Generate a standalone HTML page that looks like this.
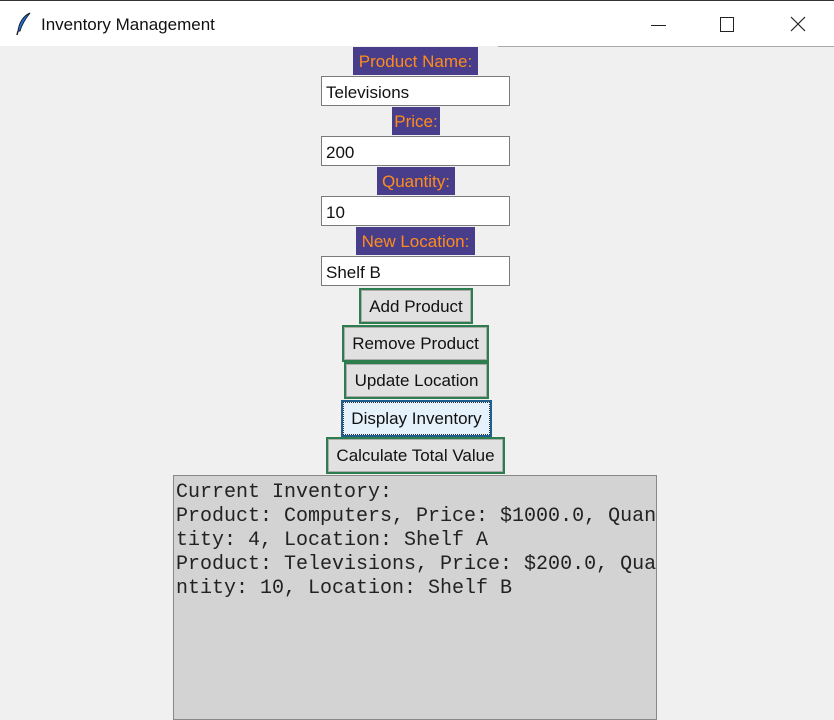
<!DOCTYPE html>
<html><head><meta charset="utf-8"><style>
*{margin:0;padding:0;box-sizing:border-box}
body{width:834px;height:720px;background:#f0f0f0;position:relative;overflow:hidden;font-family:"Liberation Sans",sans-serif}
.tb{position:absolute;left:0;top:0;width:834px;height:46px;background:#fff;border-top:1px solid #333}
.title{position:absolute;left:41px;top:14px;font-size:17px;color:#111}
.lbl{position:absolute;background:#483d8b;color:#ff8c1a;font-size:17px;height:28px;line-height:30px;text-align:center}
.ent{position:absolute;left:321px;width:189px;height:30px;background:#fff;border:1px solid #7a7a7a;font-size:17px;line-height:31px;padding-left:4px;color:#111}
.btn{position:absolute;background:#2e7d4f;padding:2px}
.btn div{background:#e1e1e1;border:1px solid #adadad;height:100%;font-size:17px;text-align:center;line-height:32px;color:#111}
.txt{position:absolute;left:173px;top:475px;width:484px;height:245px;background:#d3d3d3;border:1px solid #888;font-family:"Liberation Mono",monospace;font-size:20px;line-height:24px;padding:5px 0 0 2px;color:#222;white-space:pre}
</style></head><body>
<div class="tb">
<svg style="position:absolute;left:15px;top:11px" width="18" height="24" viewBox="0 0 18 24"><path d="M15 1 C8 4 4 11 3 19 L5 19 C7 12 11 6 15 1Z" fill="#2a6fd6" stroke="#123" stroke-width="1"/><path d="M3 19 L2 23" stroke="#222" stroke-width="1.5"/></svg>
<div class="title">Inventory Management</div>
<div style="position:absolute;left:651px;top:24px;width:15px;height:1px;background:#222"></div>
<div style="position:absolute;left:720px;top:16px;width:14px;height:15px;border:1px solid #222"></div>
<svg style="position:absolute;left:790px;top:15px" width="16" height="16"><path d="M1 1L15 15M15 1L1 15" stroke="#222" stroke-width="1.2"/></svg>
</div>
<div style="position:absolute;left:498px;top:46px;width:336px;height:1px;background:#aaa"></div>
<div class="lbl" style="left:353px;top:47px;width:125px">Product Name:</div>
<div class="ent" style="top:76px">Televisions</div>
<div class="lbl" style="left:392px;top:107px;width:48px">Price:</div>
<div class="ent" style="top:136px">200</div>
<div class="lbl" style="left:377px;top:167px;width:78px">Quantity:</div>
<div class="ent" style="top:196px">10</div>
<div class="lbl" style="left:356px;top:227px;width:119px">New Location:</div>
<div class="ent" style="top:256px">Shelf B</div>
<div class="btn" style="left:359px;top:288px;width:114px;height:36px"><div>Add Product</div></div>
<div class="btn" style="left:342px;top:325px;width:147px;height:37px"><div>Remove Product</div></div>
<div class="btn" style="left:344px;top:362px;width:145px;height:37px"><div>Update Location</div></div>
<div class="btn" style="left:341px;top:400px;width:151px;height:37px;background:#1f5f8f"><div style="background:#e5f1fb;border:1px dotted #333">Display Inventory</div></div>
<div class="btn" style="left:326px;top:437px;width:179px;height:37px"><div>Calculate Total Value</div></div>
<div class="txt">Current Inventory:
Product: Computers, Price: $1000.0, Quan
tity: 4, Location: Shelf A
Product: Televisions, Price: $200.0, Qua
ntity: 10, Location: Shelf B</div>
</body></html>
